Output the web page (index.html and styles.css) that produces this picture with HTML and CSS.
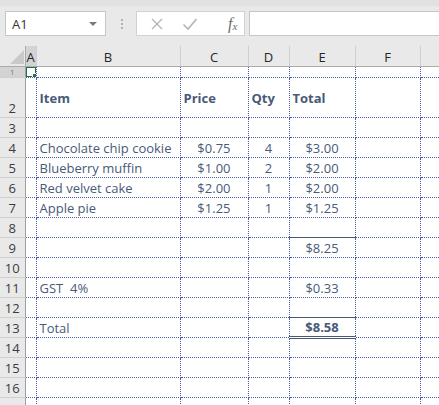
FILE: index.html
```html
<!DOCTYPE html>
<html lang="en">
<head>
    <meta charset="UTF-8">
    <meta name="viewport" content="width=device-width, initial-scale=1.0">
    <title>Bakery order</title>
    <link rel="stylesheet" href="styles.css">
</head>
<body>
    <div class="toolbar">
        <div class="namebox">
            <span>A1</span>
            <span class="caret"></span>
        </div>
        <div class="grip"><i></i><i></i><i></i></div>
        <div class="fx-buttons">
            <svg class="btn-icon" width="14" height="14" viewBox="0 0 14 14">
                <path d="M2 2 L12 12 M12 2 L2 12" stroke="#b4b4b4" stroke-width="1.3" fill="none"/>
            </svg>
            <svg class="btn-icon" width="16" height="14" viewBox="0 0 16 14">
                <path d="M1.5 7.5 L6 12 L14.5 2" stroke="#b4b4b4" stroke-width="1.6" fill="none"/>
            </svg>
            <span class="fx">f<sub>x</sub></span>
        </div>
        <div class="formula"></div>
    </div>

    <table class="sheet">
        <colgroup>
            <col class="c-hdr">
            <col class="c-a">
            <col class="c-b">
            <col class="c-c">
            <col class="c-d">
            <col class="c-e">
            <col class="c-f">
            <col class="c-g">
        </colgroup>
        <thead>
            <tr>
                <th class="corner">
                    <svg width="14" height="14" viewBox="0 0 14 14"><polygon points="14,0 14,14 0,14" fill="#c9c9c9"/></svg>
                </th>
                <th class="active">A</th>
                <th>B</th>
                <th>C</th>
                <th>D</th>
                <th>E</th>
                <th>F</th>
                <th></th>
            </tr>
        </thead>
        <tbody>
            <tr class="r1">
                <th class="active tiny">1</th>
                <td class="a1"><div class="selection"><span class="handle"></span></div></td>
                <td></td><td></td><td></td><td></td><td></td><td></td>
            </tr>
            <tr class="r2">
                <th class="bottom">2</th>
                <td></td>
                <td class="head">Item</td>
                <td class="head">Price</td>
                <td class="head">Qty</td>
                <td class="head">Total</td>
                <td></td><td></td>
            </tr>
            <tr>
                <th>3</th>
                <td></td><td></td><td></td><td></td><td></td><td></td><td></td>
            </tr>
            <tr>
                <th>4</th>
                <td></td>
                <td class="txt">Chocolate chip cookie</td>
                <td class="money">$0.75</td>
                <td class="mid">4</td>
                <td class="mid">$3.00</td>
                <td></td><td></td>
            </tr>
            <tr>
                <th>5</th>
                <td></td>
                <td class="txt">Blueberry muffin</td>
                <td class="money">$1.00</td>
                <td class="mid">2</td>
                <td class="mid">$2.00</td>
                <td></td><td></td>
            </tr>
            <tr>
                <th>6</th>
                <td></td>
                <td class="txt">Red velvet cake</td>
                <td class="money">$2.00</td>
                <td class="mid">1</td>
                <td class="mid">$2.00</td>
                <td></td><td></td>
            </tr>
            <tr>
                <th>7</th>
                <td></td>
                <td class="txt">Apple pie</td>
                <td class="money">$1.25</td>
                <td class="mid">1</td>
                <td class="mid">$1.25</td>
                <td></td><td></td>
            </tr>
            <tr>
                <th>8</th>
                <td></td><td></td><td></td><td></td><td></td><td></td><td></td>
            </tr>
            <tr>
                <th>9</th>
                <td></td><td></td><td></td><td></td>
                <td class="mid subtotal">$8.25</td>
                <td></td><td></td>
            </tr>
            <tr>
                <th>10</th>
                <td></td><td></td><td></td><td></td><td></td><td></td><td></td>
            </tr>
            <tr>
                <th>11</th>
                <td></td>
                <td class="txt">GST  4%</td>
                <td></td><td></td>
                <td class="mid">$0.33</td>
                <td></td><td></td>
            </tr>
            <tr>
                <th>12</th>
                <td></td><td></td><td></td><td></td><td></td><td></td><td></td>
            </tr>
            <tr>
                <th>13</th>
                <td></td>
                <td class="txt">Total</td>
                <td></td><td></td>
                <td class="mid grand">$8.58</td>
                <td></td><td></td>
            </tr>
            <tr>
                <th>14</th>
                <td></td><td></td><td></td><td></td><td></td><td></td><td></td>
            </tr>
            <tr>
                <th>15</th>
                <td></td><td></td><td></td><td></td><td></td><td></td><td></td>
            </tr>
            <tr>
                <th>16</th>
                <td></td><td></td><td></td><td></td><td></td><td></td><td></td>
            </tr>
            <tr>
                <th></th>
                <td></td><td></td><td></td><td></td><td></td><td></td><td></td>
            </tr>
        </tbody>
    </table>
</body>
</html>
```

FILE: styles.css
```css
:root {
    --chrome: #e9e9e9;
    --grid: #4a5ca6;
    --ink: #485a78;
    --excel-green: #217346;
}
body {
    margin: 0;
    padding: 0;
    overflow: hidden;
    background: white;
    font-family: 'Open Sans', 'Noto Sans', sans-serif;
}

/* formula bar */
.toolbar {
    display: flex;
    align-items: flex-start;
    height: 46px;
    box-sizing: border-box;
    background: var(--chrome);
    border-top: 6px solid #e1e1e1;
    padding-top: 5px;
}
.namebox {
    display: flex;
    align-items: center;
    justify-content: space-between;
    width: 101px;
    height: 25px;
    margin-left: 5px;
    box-sizing: border-box;
    padding: 0 6px 0 6px;
    background: white;
    border: 1px solid #c6c6c6;
    font-size: 13px;
    color: #333;
}
.caret {
    width: 0;
    height: 0;
    margin-right: 2px;
    border-left: 4px solid transparent;
    border-right: 4px solid transparent;
    border-top: 4px solid #7a7a7a;
}
.grip {
    display: flex;
    flex-direction: column;
    gap: 2px;
    margin: 8px 0 0 15px;
}
.grip i {
    width: 2px;
    height: 2px;
    background: #b0b0b0;
}
.fx-buttons {
    display: flex;
    align-items: center;
    width: 109px;
    height: 25px;
    margin-left: 13px;
    box-sizing: border-box;
    padding-left: 13px;
    background: white;
    border: 1px solid #d2d2d2;
}
.btn-icon {
    margin-right: 18px;
}
.fx {
    margin-left: 12px;
    font-family: 'Liberation Serif', serif;
    font-style: italic;
    font-size: 16px;
    color: #6b6b6b;
}
.fx sub {
    font-size: 11px;
    vertical-align: -1px;
}
.formula {
    flex: 1;
    height: 25px;
    margin-left: 4px;
    box-sizing: border-box;
    background: white;
    border: 1px solid #c6c6c6;
    border-right: none;
}

/* grid */
.sheet {
    table-layout: fixed;
    border-collapse: collapse;
    width: 470px;
}
.c-hdr { width: 25px; }
.c-a { width: 11px; }
.c-b { width: 144px; }
.c-c { width: 68px; }
.c-d { width: 41px; }
.c-e { width: 66px; }
.c-f { width: 65px; }
.c-g { width: 50px; }

.sheet th {
    padding: 0;
    background: var(--chrome);
    font-weight: normal;
    font-size: 13px;
    color: #262626;
}
.sheet thead th {
    height: 20px;
    border-bottom: 1px solid #ababab;
    border-right: 1px solid #d0d0d0;
    vertical-align: bottom;
    line-height: 18px;
}
.sheet thead th.corner {
    border-right: 1px solid #ababab;
    text-align: right;
    vertical-align: bottom;
    line-height: 0;
}
.corner svg {
    margin: 0 1px 2px 0;
}
.sheet th.active {
    background: #d3d3d3;
}
.sheet tbody th {
    border-right: 1px solid #9f9f9f;
    border-bottom: 1px solid #cfcfcf;
    color: #3c3c3c;
    line-height: 18px;
}
.sheet tbody th.tiny {
    font-size: 7px;
    line-height: 9px;
    color: #707070;
}
.sheet tbody th.bottom {
    vertical-align: bottom;
}
.sheet tr { height: 20px; }
.sheet tr.r1 { height: 11px; }
.sheet tr.r2 { height: 40px; }

.sheet td {
    padding: 0 3px;
    border-right: 1px dotted var(--grid);
    border-bottom: 1px dotted var(--grid);
    font-size: 13px;
    line-height: 18px;
    color: var(--ink);
    white-space: pre;
    overflow: hidden;
}
.sheet td.a1 {
    position: relative;
    padding: 0;
}
.selection {
    position: absolute;
    left: -1px;
    top: -1px;
    width: 12px;
    height: 12px;
    border: 2px solid var(--excel-green);
    box-sizing: border-box;
}
.handle {
    position: absolute;
    right: -4px;
    bottom: -4px;
    width: 5px;
    height: 5px;
    background: var(--excel-green);
    border: 1px solid white;
}
.head {
    font-weight: bold;
}
.money {
    text-align: right;
    padding-right: 17px !important;
}
.mid {
    text-align: center;
}
.subtotal {
    border-top: 1px solid var(--ink);
}
.grand {
    font-weight: bold;
    border-top: 1px solid var(--ink);
    border-bottom: 3px double var(--ink) !important;
}
```
